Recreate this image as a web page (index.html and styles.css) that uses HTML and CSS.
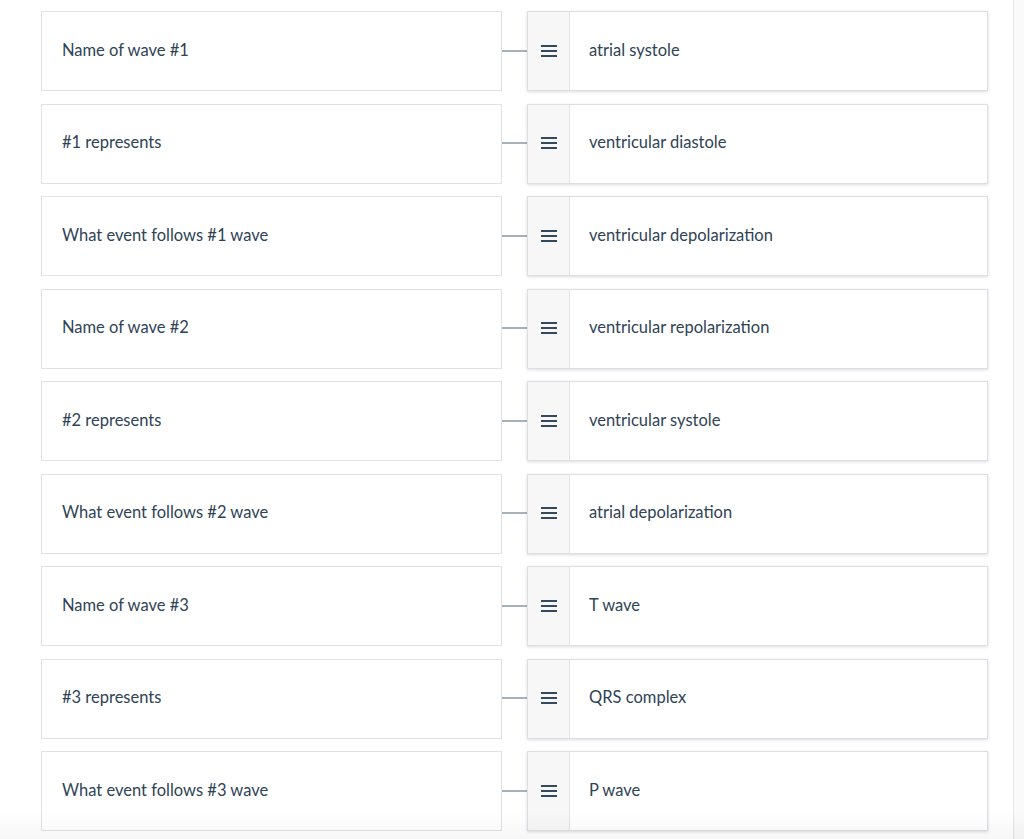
FILE: index.html
```html
<!doctype html>
<html lang="en">

<head>
  <meta charset="utf-8">
  <title>Matching</title>
  <link rel="stylesheet" href="styles.css">
</head>

<body>

  <div class="panel">
    <div class="match-list">

      <div class="match-row">
        <div class="prompt">Name of wave #1</div>
        <div class="connector"></div>
        <div class="answer">
          <div class="handle"><span class="bars"></span></div>
          <div class="answer-text">atrial systole</div>
        </div>
      </div>

      <div class="match-row">
        <div class="prompt">#1 represents</div>
        <div class="connector"></div>
        <div class="answer">
          <div class="handle"><span class="bars"></span></div>
          <div class="answer-text">ventricular diastole</div>
        </div>
      </div>

      <div class="match-row">
        <div class="prompt">What event follows #1 wave</div>
        <div class="connector"></div>
        <div class="answer">
          <div class="handle"><span class="bars"></span></div>
          <div class="answer-text">ventricular depolarization</div>
        </div>
      </div>

      <div class="match-row">
        <div class="prompt">Name of wave #2</div>
        <div class="connector"></div>
        <div class="answer">
          <div class="handle"><span class="bars"></span></div>
          <div class="answer-text">ventricular repolarization</div>
        </div>
      </div>

      <div class="match-row">
        <div class="prompt">#2 represents</div>
        <div class="connector"></div>
        <div class="answer">
          <div class="handle"><span class="bars"></span></div>
          <div class="answer-text">ventricular systole</div>
        </div>
      </div>

      <div class="match-row">
        <div class="prompt">What event follows #2 wave</div>
        <div class="connector"></div>
        <div class="answer">
          <div class="handle"><span class="bars"></span></div>
          <div class="answer-text">atrial depolarization</div>
        </div>
      </div>

      <div class="match-row">
        <div class="prompt">Name of wave #3</div>
        <div class="connector"></div>
        <div class="answer">
          <div class="handle"><span class="bars"></span></div>
          <div class="answer-text">T wave</div>
        </div>
      </div>

      <div class="match-row">
        <div class="prompt">#3 represents</div>
        <div class="connector"></div>
        <div class="answer">
          <div class="handle"><span class="bars"></span></div>
          <div class="answer-text">QRS complex</div>
        </div>
      </div>

      <div class="match-row">
        <div class="prompt">What event follows #3 wave</div>
        <div class="connector"></div>
        <div class="answer">
          <div class="handle"><span class="bars"></span></div>
          <div class="answer-text">P wave</div>
        </div>
      </div>

    </div>
  </div>

  <!-- scroll fade at the bottom edge -->
  <div class="bottom-fade"></div>

</body>

</html>
```

FILE: styles.css
```css
html,
body {
  height: 100%;
}

body {
  margin: 0;
  font-family: 'Lato', 'Liberation Sans', sans-serif;
  font-size: 16.5px;
  color: #2f4356;
  background-color: #fafafa;
  overflow: hidden;
}

.panel {
  width: 1014px;
  height: 100%;
  box-sizing: border-box;
  background-color: #fff;
  border-right: 1px solid #e6e6e6;
  padding: 11px 0 0 41px;
}

.match-list {
  display: flex;
  flex-direction: column;
  gap: 12.5px;
}

.match-row {
  display: flex;
  align-items: center;
  height: 80px;
}

.prompt {
  width: 461px;
  height: 100%;
  box-sizing: border-box;
  border: 1px solid #dfe2e6;
  padding: 0 20px 3px;
  display: flex;
  align-items: center;
  background-color: #fff;
}

.connector {
  width: 25px;
  height: 2px;
  margin-bottom: 1px;
  background-color: #a7b1ba;
}

.answer {
  width: 461px;
  height: 100%;
  box-sizing: border-box;
  border: 1px solid #dcdfe3;
  display: flex;
  background-color: #fff;
  box-shadow: 0 1px 3px rgba(0, 0, 0, 0.14);
}

.handle {
  width: 41px;
  flex: none;
  background-color: #f7f7f7;
  border-right: 1px solid #e1e3e6;
  display: flex;
  align-items: center;
  justify-content: center;
  padding-bottom: 1px;
}

.bars {
  display: block;
  width: 16px;
  height: 2px;
  background-color: #34495e;
  box-shadow: 0 -5px 0 #34495e, 0 5px 0 #34495e;
}

.answer-text {
  display: flex;
  align-items: center;
  padding: 0 0 3px 19px;
}

.bottom-fade {
  position: fixed;
  left: 0;
  right: 0;
  bottom: 0;
  height: 26px;
  pointer-events: none;
  background: linear-gradient(to bottom, rgba(0, 0, 0, 0), rgba(0, 0, 0, 0.035));
}
```
